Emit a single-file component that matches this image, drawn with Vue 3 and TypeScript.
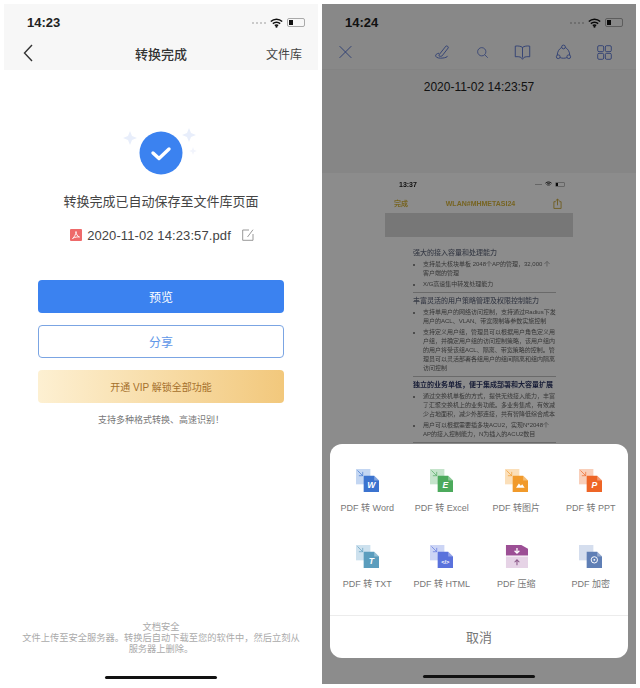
<template>
  <div class="page">
    <!-- 左屏：转换完成 -->
    <section class="screen result">
      <header class="head">
        <div class="status">
          <span class="time">14:23</span>
          <div class="status-icons">
            <span class="signal"><i></i><i></i><i></i><i></i></span>
            <svg class="wifi" viewBox="0 0 16 12"><path d="M1 4.2a10 10 0 0 1 14 0M3.5 6.8a6.4 6.4 0 0 1 9 0M6 9.2a2.8 2.8 0 0 1 4 0" fill="none" stroke="#111" stroke-width="1.9" /><circle cx="8" cy="10.6" r="1.3" fill="#111" /></svg>
            <span class="battery"><b></b></span>
          </div>
        </div>
        <div class="nav">
          <svg class="back" viewBox="0 0 10 18"><path d="M9 1 1.5 9 9 17" fill="none" stroke="#333" stroke-width="1.4" /></svg>
          <span class="nav-title">转换完成</span>
          <span class="nav-link">文件库</span>
        </div>
      </header>

      <main class="content">
        <svg class="done" viewBox="0 0 80 58">
          <path d="M9 12 11 17 16 19 11 21 9 26 7 21 2 19 7 17Z" fill="#e8eefb" />
          <path d="M68 9 70 14 75 16 70 18 68 23 66 18 61 16 66 14Z" fill="#e8eefb" />
          <path d="M72 28 73 31 76 32 73 33 72 36 71 33 68 32 71 31Z" fill="#f1f4fc" />
          <circle cx="40" cy="34" r="21.5" fill="#3b82f0" />
          <path d="M32 34 38 39.500 48 30" fill="none" stroke="#fff" stroke-width="3.400" stroke-linecap="round" stroke-linejoin="round" />
        </svg>
        <p class="message">转换完成已自动保存至文件库页面</p>
        <div class="file">
          <svg class="pdf" viewBox="0 0 12 12"><rect width="12" height="12" rx="1" fill="#ee6a6a" /><path d="M2.500 9.500C4.500 8 6 5 6 2.500c0 2.500 1.500 5 3.500 5.500-2-.3-4.500 0-7 1.500Z" fill="none" stroke="#fff" stroke-width=".9" /></svg>
          <span class="file-name">2020-11-02 14:23:57.pdf</span>
          <svg class="edit" viewBox="0 0 12 12"><path d="M7 1H.7v10.300H11V5M11 .7 5.500 8" fill="none" stroke="#8d8d8d" stroke-width=".9" /></svg>
        </div>
        <button class="btn primary">预览</button>
        <button class="btn outline">分享</button>
        <button class="btn vip">开通 VIP 解锁全部功能</button>
        <p class="tip">支持多种格式转换、高速识别！</p>
      </main>

      <footer class="secure">
        <p>文档安全</p>
        <p>文件上传至安全服务器。转换后自动下载至您的软件中，然后立刻从服务器上删除。</p>
      </footer>
      <div class="home"></div>
    </section>

    <!-- 右屏：预览 + 转换面板 -->
    <section class="screen preview">
      <header class="tool-head">
        <div class="status">
          <span class="time">14:24</span>
          <div class="status-icons">
            <span class="signal"><i></i><i></i><i></i><i></i></span>
            <svg class="wifi" viewBox="0 0 16 12"><path d="M1 4.2a10 10 0 0 1 14 0M3.5 6.8a6.4 6.4 0 0 1 9 0M6 9.2a2.8 2.8 0 0 1 4 0" fill="none" stroke="#111" stroke-width="1.9" /><circle cx="8" cy="10.6" r="1.3" fill="#111" /></svg>
            <span class="battery"><b></b></span>
          </div>
        </div>
        <div class="tools">
          <svg class="tool close" viewBox="0 0 20 20"><path d="M4 3.500 17 16.500M17 3.500 4 16.500" /></svg>
          <div class="tool-group">
            <svg class="tool" viewBox="0 0 20 20"><path d="M6.500 12 14 2.500c1-1 3.500.8 2.700 2.200L9.500 14c-1 .7-3 .6-3.500.2-.2-.6-.2-1.500.5-2.200ZM6 10.800c-3 .5-4.500 1.800-4 3.500.6 2.200 5 2.700 8.500 2.200 3-.4 5-1 5.500-2.500" /></svg>
            <svg class="tool small" viewBox="0 0 20 20"><circle cx="9" cy="9" r="5.500" /><path d="M13 13 17 17" /></svg>
            <svg class="tool" viewBox="0 0 20 20"><path d="M10 4C8 2.500 4.500 2 1.500 2.500V15c3-.3 5.500 0 7 1l1.500 2 1.500-2c1.500-1 4-1.300 7-1V2.500C15.500 2 12 2.500 10 4ZM10 4V16" /></svg>
            <svg class="tool" viewBox="0 0 20 20"><circle cx="10" cy="3.500" r="2.200" /><circle cx="3.800" cy="15" r="2.200" /><circle cx="16.200" cy="15" r="2.200" /><path d="M7.800 4C4.500 6 2.700 9.500 2.700 13M12.200 4c3.300 2 5.100 5.500 5.100 9M6 16c2.500 1 5.500 1 8 0" /></svg>
            <svg class="tool" viewBox="0 0 20 20"><rect x="2" y="2" width="7" height="7" rx="1.500" /><rect x="11" y="2" width="7" height="7" rx="1.500" /><rect x="2" y="11" width="7" height="7" rx="1.500" /><rect x="11" y="11" width="7" height="7" rx="1.500" /></svg>
          </div>
        </div>
      </header>

      <div class="doc-title">2020-11-02 14:23:57</div>

      <article class="doc">
        <div class="doc-status">
          <span>13:37</span>
          <div class="doc-icons">
            <span class="doc-dots"></span>
            <svg viewBox="0 0 16 12"><path d="M1 4.2a10 10 0 0 1 14 0M3.5 6.8a6.4 6.4 0 0 1 9 0M6 9.2a2.8 2.8 0 0 1 4 0" fill="none" stroke="#111" stroke-width="2" /></svg>
            <span class="doc-battery"><b></b></span>
          </div>
        </div>
        <div class="doc-nav">
          <span>完成</span>
          <span>WLAN#MHMETASI24</span>
          <svg viewBox="0 0 10 12"><path d="M3 4H1v7.500h8V4H7M5 8V1M3 3l2-2 2 2" fill="none" stroke="#c9a83a" /></svg>
        </div>
        <div class="doc-band"></div>
        <div class="doc-body">
          <div v-for="section in docSections" :key="section.title" class="doc-section">
            <h4 :class="{ strong: section.strong }">{{ section.title }}</h4>
            <ul>
              <li v-for="line in section.lines" :key="line">{{ line }}</li>
            </ul>
          </div>
        </div>
      </article>

      <div class="mask"></div>

      <div class="sheet">
        <div class="formats">
          <div v-for="item in formats" :key="item.label" class="format">
            <svg v-if="item.type === 'zip'" class="format-icon" viewBox="0 0 24 24">
              <path d="M1 0H17L24 4V11H1Z" fill="#9c4f95" />
              <rect x="1" y="12" width="23" height="12" fill="#e6d3e6" />
              <path d="M12.500 3V8M10 6 12.500 8.500 15 6" fill="none" stroke="#fff" stroke-width="1.300" />
              <path d="M12.500 21V16M10 18 12.500 15.500 15 18" fill="none" stroke="#8c5a8a" stroke-width="1.100" />
            </svg>
            <svg v-else class="format-icon" viewBox="0 0 24 24">
              <rect x="0" y="0" width="15" height="16" :fill="item.light" />
              <path v-if="item.type !== 'lock'" d="M1.500 1.500 7 7M7 3V7H3" fill="none" :stroke="item.color" stroke-opacity=".7" stroke-width="1" />
              <path d="M8 7H19L24 12V24H8Z" :fill="item.color" />
              <path d="M19 7V12H24Z" fill="#fff" fill-opacity=".35" />
              <circle v-if="item.type === 'lock'" cx="16" cy="15.500" r="3.300" fill="none" stroke="#fff" stroke-width="1" />
              <circle v-if="item.type === 'lock'" cx="16" cy="15.500" r="1" fill="#fff" />
              <path v-if="item.type === 'image'" d="M11.500 19.500 14.500 15 16.500 17.500 18 16 20.500 19.500Z" fill="#fff" />
              <text v-if="item.letter" x="16" y="20" class="format-letter" :class="{ code: item.type === 'code' }">{{ item.letter }}</text>
            </svg>
            <span class="format-label">{{ item.label }}</span>
          </div>
        </div>
        <div class="cancel">取消</div>
      </div>
      <div class="home"></div>
    </section>
  </div>
</template>

<script setup lang="ts">
interface FormatItem {
  label: string
  color: string
  light: string
  letter?: string
  type?: 'image' | 'code' | 'zip' | 'lock'
}

const formats: FormatItem[] = [
  { label: 'PDF 转 Word', color: '#3b73cf', light: '#c3d6f2', letter: 'W' },
  { label: 'PDF 转 Excel', color: '#4caa5c', light: '#c5e4cb', letter: 'E' },
  { label: 'PDF 转图片', color: '#f19a2b', light: '#fbdfb9', type: 'image' },
  { label: 'PDF 转 PPT', color: '#ee6526', light: '#f9cfba', letter: 'P' },
  { label: 'PDF 转 TXT', color: '#5b9dbd', light: '#cde1ee', letter: 'T' },
  { label: 'PDF 转 HTML', color: '#5a72dc', light: '#ccd5f5', letter: '</>', type: 'code' },
  { label: 'PDF 压缩', color: '#9c4f95', light: '#e6d3e6', type: 'zip' },
  { label: 'PDF 加密', color: '#5f7fb5', light: '#d5deee', type: 'lock' }
]

const docSections = [
  {
    title: '强大的接入容量和处理能力',
    lines: ['支持最大核块单板 2048个AP的管理，32,000 个客户端的管理', 'X/G高速集中转发处理能力']
  },
  {
    title: '丰富灵活的用户策略管理及权限控制能力',
    lines: [
      '支持单用户的网络访问控制，支持通过Radius下发用户的ACL、VLAN、带宽限制等参数实施控制',
      '支持定义用户组，管理员可以根据用户角色定义用户组，并确定用户组的访问控制策略，该用户组内的用户将受该组ACL、隔离、带宽策略的控制。管理员可以灵活部署各组用户的组间隔离和组内隔离访问控制'
    ]
  },
  {
    title: '独立的业务单板，便于集成部署和大容量扩展',
    strong: true,
    lines: [
      '通过交换机单板的方式，提供无线接入能力，丰富了汇聚交换机上的业务功能。多业务集成，有效减少占地面积，减少外部连接，共有智降低综合成本',
      '用户可以根据需要插多块ACU2，实现N*2048个AP的接入控制能力，N为插入的ACU2数目'
    ]
  },
  {
    title: 'WLAN整网的网络可视与运维',
    strong: true,
    lines: []
  }
]
</script>

<style>
html,
body {
  margin: 0;
  background: #fff;
}
</style>

<style scoped>
.page {
  display: flex;
  gap: 4px;
  width: 640px;
  height: 688px;
  padding: 4px;
  box-sizing: border-box;
  overflow: hidden;
  font-family: "Liberation Sans", "Noto Sans CJK SC", sans-serif;
}

.screen {
  position: relative;
  display: flex;
  flex-direction: column;
  width: 314px;
  height: 680px;
  overflow: hidden;
  background: #fff;
}

.head {
  height: 66px;
  background: #f7f7f7;
}

.status {
  display: flex;
  align-items: center;
  justify-content: space-between;
  height: 35px;
  padding: 2px 13px 0 23px;
  box-sizing: border-box;
}

.time {
  font-size: 13px;
  font-weight: 700;
  color: #222;
}

.status-icons {
  display: flex;
  align-items: center;
}

.signal {
  display: flex;
  gap: 2px;
  margin-right: 4px;
}

.signal i {
  width: 2px;
  height: 2px;
  border-radius: 50%;
  background: #bbb;
}

.wifi {
  width: 13px;
  height: 10px;
  margin-right: 4px;
}

.battery {
  display: flex;
  width: 18px;
  height: 9px;
  padding: 1px;
  box-sizing: border-box;
  border: 1px solid #aaa;
  border-radius: 2px;
}

.battery b {
  width: 4px;
  background: #111;
}

.nav {
  display: flex;
  align-items: center;
  justify-content: space-between;
  position: relative;
  height: 28px;
  padding: 0 16px 0 19px;
}

.back {
  width: 10px;
  height: 18px;
}

.nav-title {
  position: absolute;
  left: 0;
  right: 0;
  text-align: center;
  font-size: 13px;
  font-weight: 500;
  color: #333;
}

.nav-link {
  font-size: 12px;
  color: #444;
}

.content {
  display: flex;
  flex-direction: column;
  align-items: center;
}

.done {
  width: 80px;
  height: 58px;
  margin-top: 49px;
}

.message {
  margin: 16px 0 0;
  font-size: 13px;
  line-height: 18px;
  color: #444;
}

.file {
  display: flex;
  align-items: center;
  height: 20px;
  margin-top: 14px;
  padding-left: 2px;
}

.pdf {
  width: 12px;
  height: 12px;
  margin-right: 5px;
}

.file-name {
  font-size: 13px;
  letter-spacing: 0.1px;
  color: #444;
}

.edit {
  width: 12px;
  height: 12px;
  margin-left: 11px;
}

.btn {
  width: 246px;
  height: 33px;
  margin: 0;
  padding: 0;
  border: 0;
  border-radius: 4px;
  font-family: inherit;
  font-size: 12px;
}

.primary {
  margin-top: 35px;
  background: #3b82f0;
  color: #fff;
}

.outline {
  margin-top: 12px;
  background: #fff;
  border: 1px solid #7ba5e3;
  color: #5f97e8;
}

.vip {
  margin-top: 12px;
  background: linear-gradient(90deg, #fdf0d2, #f2c87c);
  color: #a5702c;
  font-size: 10px;
}

.tip {
  margin: 10px 0 0;
  font-size: 9px;
  line-height: 14px;
  color: #777;
}

.secure {
  margin-top: auto;
  padding: 0 17px 0;
  text-align: center;
  font-size: 9.250px;
  line-height: 11px;
  color: #aaa;
}

.secure p {
  margin: 0;
}

.home {
  flex: none;
  width: 112px;
  height: 3px;
  margin: 21px auto 5px;
  border-radius: 2px;
  background: #111;
}

.preview {
  height: 680px;
  background: #fff;
}

.tool-head {
  height: 66px;
  background: #f7f7f7;
  border-bottom: 1px solid #eee;
  box-sizing: border-box;
}

.tools {
  display: flex;
  align-items: center;
  justify-content: space-between;
  height: 26px;
  padding: 0 23px 0 14px;
}

.tool-group {
  display: flex;
  align-items: center;
  gap: 24px;
}

.tool {
  width: 17px;
  height: 17px;
  fill: none;
  stroke: #4c6ad0;
  stroke-width: 1;
}

.tool.close {
  width: 18px;
  height: 18px;
}

.tool.small {
  width: 15px;
  height: 15px;
}

.doc-title {
  height: 103px;
  padding-top: 8px;
  box-sizing: border-box;
  background: #f5f5f5;
  text-align: center;
  font-size: 12px;
  line-height: 18px;
  color: #222;
}

.doc {
  flex: 1;
  min-height: 0;
  overflow: hidden;
  padding: 0 63px;
  background: #fff;
  filter: blur(0.5px);
}

.doc-status {
  display: flex;
  justify-content: space-between;
  height: 22px;
  align-items: center;
  padding: 0 8px 0 14px;
  font-size: 7px;
  font-weight: 700;
  color: #222;
}

.doc-icons {
  display: flex;
  align-items: center;
  gap: 3px;
}

.doc-icons svg {
  width: 7px;
  height: 6px;
}

.doc-dots {
  width: 7px;
  height: 1px;
  background: #bbb;
}

.doc-battery {
  display: flex;
  width: 10px;
  height: 5px;
  box-sizing: border-box;
  border: 1px solid #bbb;
  border-radius: 1px;
}

.doc-battery b {
  width: 2px;
  background: #111;
}

.doc-nav {
  display: flex;
  align-items: center;
  justify-content: space-between;
  height: 16px;
  margin-bottom: 2px;
  padding: 0 11px 0 9px;
  font-size: 7px;
  font-weight: 700;
  color: #d8b63e;
}

.doc-nav svg {
  width: 9px;
  height: 11px;
}

.doc-band {
  height: 24px;
  background: #d9d9d9;
}

.doc-body {
  padding: 10px 17px 0 28px;
}

.doc-section {
  padding-bottom: 2px;
  border-bottom: 1px solid #c2c2c2;
  margin-bottom: 2px;
}

.doc-section h4 {
  margin: 0 0 2px;
  font-size: 7px;
  line-height: 11px;
  font-weight: 500;
  color: #6b7285;
}

.doc-section h4.strong {
  color: #2e3866;
  font-weight: 700;
}

.doc-section ul {
  margin: 0;
  padding: 0 0 0 10px;
}

.doc-section li {
  margin-bottom: 1.500px;
  font-size: 6px;
  line-height: 9px;
  color: #666;
}

.mask {
  position: absolute;
  inset: 0;
  background: rgba(0, 0, 0, 0.45);
}

.sheet {
  position: absolute;
  left: 8px;
  right: 8px;
  bottom: 26px;
  height: 214px;
  display: flex;
  flex-direction: column;
  border-radius: 12px;
  background: #fff;
}

.formats {
  flex: none;
  height: 171px;
  display: grid;
  grid-template-columns: repeat(4, 1fr);
  grid-template-rows: 76px 70px;
  padding-top: 25px;
  box-sizing: border-box;
}

.format {
  display: flex;
  flex-direction: column;
  align-items: center;
}

.format-icon {
  width: 23px;
  height: 23px;
}

.format-label {
  margin-top: 9px;
  font-size: 9px;
  line-height: 14px;
  white-space: nowrap;
  color: #777;
}

.format-letter {
  fill: #fff;
  font-family: "Liberation Sans", sans-serif;
  font-size: 9px;
  font-style: italic;
  font-weight: 700;
  text-anchor: middle;
}

.format-letter.code {
  font-size: 6px;
  font-style: normal;
}

.cancel {
  height: 43px;
  border-top: 1px solid #ececec;
  text-align: center;
  font-size: 13px;
  line-height: 43px;
  color: #777;
}

.preview .home {
  position: absolute;
  left: 101px;
  bottom: 6px;
  margin: 0;
}
</style>
